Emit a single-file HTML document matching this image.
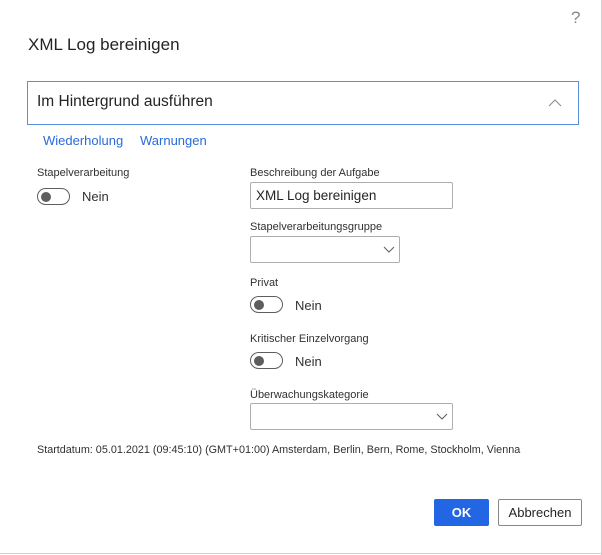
<!DOCTYPE html>
<html><head><meta charset="utf-8"><style>
*{margin:0;padding:0;box-sizing:border-box}
body{width:602px;height:555px;background:#fff;font-family:"Liberation Sans",sans-serif;color:#252423;position:relative;overflow:hidden}
.a{position:absolute;white-space:nowrap}
.lbl{font-size:11px;color:#323130}
.tog{position:absolute;width:33px;height:17px;border:1px solid #605e5c;border-radius:9px}
.tog::after{content:"";position:absolute;left:3px;top:2.5px;width:10px;height:10px;border-radius:50%;background:#605e5c}
.nein{font-size:13px;color:#323130}
.box{position:absolute;border:1px solid #b0aeac;border-radius:2px;background:#fff}
.chev{position:absolute}
</style></head><body>
<div style="position:absolute;right:0;top:0;width:1px;height:555px;background:#d0d0d0"></div>
<div style="position:absolute;left:0;bottom:1px;width:602px;height:1px;background:#d0d0d0"></div>
<div class="a" style="left:571px;top:8px;font-size:17px;color:#8a8886">?</div>
<div class="a" style="left:28px;top:35px;font-size:17px;color:#252423">XML Log bereinigen</div>
<div style="position:absolute;left:27px;top:81px;width:552px;height:44px;border:1px solid #5a8fe0"></div>
<div class="a" style="left:37px;top:93px;font-size:15.5px;color:#252423">Im Hintergrund ausführen</div>
<svg class="chev" style="left:548px;top:98px" width="14" height="9"><path d="M1 8 L7 2 L13 8" fill="none" stroke="#8a8886" stroke-width="1"/></svg>
<div class="a" style="left:43px;top:133px;font-size:13px;color:#2a6bd9">Wiederholung</div>
<div class="a" style="left:140px;top:133px;font-size:13px;color:#2a6bd9">Warnungen</div>

<div class="a lbl" style="left:37px;top:167px">Stapelverarbeitung</div>
<div class="tog" style="left:37px;top:188px"></div>
<div class="a nein" style="left:82px;top:189px">Nein</div>

<div class="a lbl" style="left:250px;top:167px">Beschreibung der Aufgabe</div>
<div class="box" style="left:250px;top:182px;width:203px;height:27px"></div>
<div class="a" style="left:256px;top:188px;font-size:13.5px;color:#252423">XML Log bereinigen</div>

<div class="a lbl" style="left:250px;top:221px">Stapelverarbeitungsgruppe</div>
<div class="box" style="left:250px;top:236px;width:150px;height:27px"></div>
<svg class="chev" style="left:383px;top:246px" width="12" height="7"><path d="M1 1 L6 6 L11 1" fill="none" stroke="#605e5c" stroke-width="1"/></svg>

<div class="a lbl" style="left:250px;top:277px">Privat</div>
<div class="tog" style="left:250px;top:296px"></div>
<div class="a nein" style="left:295px;top:298px">Nein</div>

<div class="a lbl" style="left:250px;top:333px">Kritischer Einzelvorgang</div>
<div class="tog" style="left:250px;top:352px"></div>
<div class="a nein" style="left:295px;top:354px">Nein</div>

<div class="a lbl" style="left:250px;top:389px">Überwachungskategorie</div>
<div class="box" style="left:250px;top:403px;width:203px;height:27px"></div>
<svg class="chev" style="left:436px;top:413px" width="12" height="7"><path d="M1 1 L6 6 L11 1" fill="none" stroke="#605e5c" stroke-width="1"/></svg>

<div class="a lbl" style="left:37px;top:444px;font-size:10.8px">Startdatum: 05.01.2021 (09:45:10) (GMT+01:00) Amsterdam, Berlin, Bern, Rome, Stockholm, Vienna</div>

<div style="position:absolute;left:434px;top:499px;width:55px;height:27px;background:#2266e3;border-radius:2px;color:#fff;font-weight:bold;font-size:13px;text-align:center;line-height:27px">OK</div>
<div style="position:absolute;left:498px;top:499px;width:84px;height:27px;border:1px solid #8a8886;border-radius:2px;color:#252423;font-size:13px;text-align:center;line-height:25px">Abbrechen</div>
</body></html>
